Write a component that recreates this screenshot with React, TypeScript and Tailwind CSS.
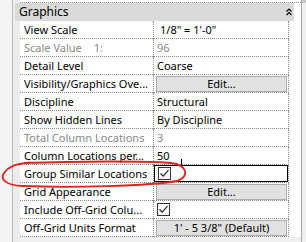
import React from "react";

type Row = {
  label: string;
  aside?: string;
  value: string;
  kind: "text" | "field" | "button" | "check";
  dim?: boolean;
  selected?: boolean;
};

const rows: Row[] = [
  { label: "View Scale", value: "1/8\" = 1'-0\"", kind: "field" },
  { label: "Scale Value", aside: "1:", value: "96", kind: "text", dim: true },
  { label: "Detail Level", value: "Coarse", kind: "text" },
  { label: "Visibility/Graphics Ove...", value: "Edit...", kind: "button" },
  { label: "Discipline", value: "Structural", kind: "text" },
  { label: "Show Hidden Lines", value: "By Discipline", kind: "text" },
  { label: "Total Column Locations", value: "3", kind: "text", dim: true },
  { label: "Column Locations per...", value: "50", kind: "text" },
  { label: "Group Similar Locations", value: "", kind: "check", selected: true },
  { label: "Grid Appearance", value: "Edit...", kind: "button" },
  { label: "Include Off-Grid Colu...", value: "", kind: "check" },
  { label: "Off-Grid Units Format", value: "1' - 5 3/8\" (Default)", kind: "button" },
];

const Check = () => (
  <div className="w-[13px] h-[13px] border border-[#333] bg-white flex items-center justify-center">
    <svg width="11" height="11" viewBox="0 0 11 11">
      <path d="M1.5 5.5 L4.2 8.2 L9.5 2.2" fill="none" stroke="#222" strokeWidth="1.2" />
    </svg>
  </div>
);

const Value = ({ r }: { r: Row }) => {
  if (r.kind === "button") {
    return (
      <div className="h-full flex items-center pl-[2px] pr-[1px]">
        <div className="w-full h-[16px] bg-[#e1e1e1] border border-[#adadad] flex items-center justify-center text-black">
          {r.value}
        </div>
      </div>
    );
  }
  if (r.kind === "check") {
    return (
      <div
        className={`h-full flex items-center pl-[3px] ${
          r.selected ? "border border-black" : ""
        }`}
      >
        <Check />
      </div>
    );
  }
  return (
    <div
      className={`h-full flex items-center ${r.kind === "field" ? "pl-[6px]" : "pl-[3px]"} ${
        r.dim ? "text-[#8a8a8a]" : "text-black"
      }`}
    >
      {r.value}
    </div>
  );
};

export default function App() {
  return (
    <div
      className="relative w-[306px] h-[242px] overflow-hidden flex bg-white text-[11px] leading-none"
      style={{ fontFamily: '"Noto Sans", "Open Sans", sans-serif' }}
    >
      {/* outer gutter */}
      <div className="w-[12px] bg-[#f4f4f4] border-r border-[#b9b9b9] box-content" />

      {/* grid */}
      <div className="w-[288px] flex flex-col bg-[#ececec]">
        <div className="h-[3px] flex shrink-0">
          <div className="w-[7px] bg-[#ececec]" />
          <div className="flex-1 bg-white border-b border-dotted border-[#8c8c8c]" />
        </div>
        <div className="h-[18px] shrink-0 flex bg-white">
          <div className="w-[2px] bg-[#ececec]" />
          <div className="w-[279px] bg-[#dadada] flex items-center justify-between pl-[4px] pr-[2px] text-[12px]">
            <span>Graphics</span>
            <svg width="6" height="8" viewBox="0 0 6 8">
              <path d="M0.5 3.5 L3 1 L5.5 3.5 M0.5 7 L3 4.5 L5.5 7" fill="none" stroke="#000" strokeWidth="1.2" />
            </svg>
          </div>
        </div>
        {rows.map((r) => (
          <div key={r.label} className="h-[18px] shrink-0 flex">
            <div className="w-[7px] bg-[#ececec]" />
            <div className="w-[133px] bg-white border-b border-dotted border-[#8c8c8c] flex items-center pl-[4px] whitespace-nowrap overflow-hidden">
              <span className={r.dim ? "text-[#8a8a8a]" : "text-black"}>{r.label}</span>
              {r.aside && <span className="ml-[12px] text-[#8a8a8a]">{r.aside}</span>}
            </div>
            <div className="w-[136px] bg-white border-b border-x border-dotted border-[#8c8c8c] relative">
              <Value r={r} />
            </div>
            <div className="flex-1 bg-white" />
          </div>
        ))}
        <div className="flex-1 flex">
          <div className="w-[7px] bg-[#ececec]" />
          <div className="flex-1 bg-[#f0f0f0]" />
        </div>
      </div>

      {/* scrollbar edge */}
      <div className="flex-1 border-l border-[#a8a8a8] bg-[#f0f0f0] flex flex-col">
        <div className="h-[3px] bg-[#c8c8c8]" />
      </div>

      {/* annotation */}
      <svg className="absolute left-0 top-0 pointer-events-none" width="306" height="242">
        <path
          d="M24 163 C 80 161, 150 161, 171 163 C 187 165, 190 176, 177 181 C 150 186, 70 188, 22 186 C 5 185, 0 179, 4 173 C 8 167, 14 164, 30 162.5"
          fill="none"
          stroke="#e0221e"
          strokeWidth="1.8"
        />
        <line x1="181.5" y1="159" x2="181.5" y2="165" stroke="#000" strokeWidth="1" />
      </svg>
    </div>
  );
}
